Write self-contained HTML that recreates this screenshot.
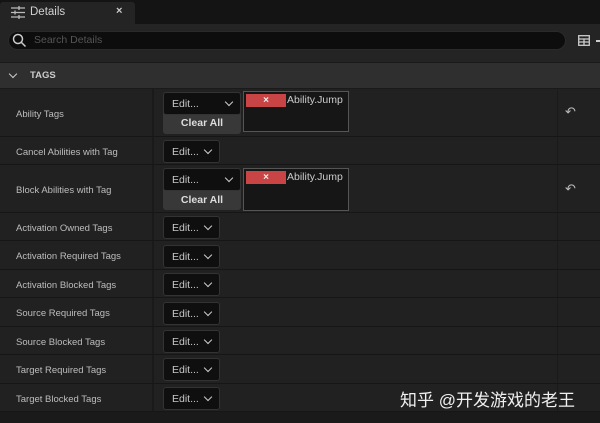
<!DOCTYPE html><html><head><style>
*{margin:0;padding:0;box-sizing:border-box}
body{width:600px;height:423px;background:#1a1a1a;font-family:"Liberation Sans","Noto Sans CJK SC",sans-serif;overflow:hidden;position:relative;color:#c0c0c0}
.a{position:absolute}
.row{position:absolute;left:0;width:600px;background:#212121;border-bottom:1px solid #161616}
.lbl{position:absolute;left:16px;font-size:9.5px;color:#bdbdbd}
.sep{position:absolute;left:152px;top:0;bottom:0;width:2px;background:#1a1a1a}
.sep2{position:absolute;left:557px;top:0;bottom:0;width:1px;background:#1a1a1a}
.edit{position:absolute;left:163px;width:57px;height:23px;background:#0f0f0f;border:1px solid #333;border-radius:3px;font-size:10.5px;color:#c8c8c8;padding:5px 0 0 8px}
.chev{position:absolute;width:6px;height:6px;border-right:1.6px solid #ccc;border-bottom:1.6px solid #ccc;transform:rotate(45deg)}
</style></head><body>
<div class="a" style="left:0;top:0;width:600px;height:24px;background:#141414"></div>
<div class="a" style="left:0;top:2px;width:135px;height:22px;background:#242424;border-radius:3px 3px 0 0"></div>
<svg class="a" style="left:10px;top:6px" width="16" height="13" viewBox="0 0 16 13" stroke="#bbb" stroke-width="1.3"><path d="M1 2h14M1 6.5h14M1 11h14"/><path d="M9 0v4M5 4.5v4M9 9v4" /></svg>
<div class="a" style="left:30px;top:6px;font-size:11.5px;color:#d0d0d0">Details</div>
<div class="a" style="left:116px;top:5px;font-size:11px;color:#ccc;font-weight:bold">×</div>
<div class="a" style="left:0;top:24px;width:600px;height:38px;background:#242424"></div>
<div class="a" style="left:8px;top:31px;width:558px;height:19px;background:#0d0d0d;border-radius:10px;border:1px solid #2a2a2a"></div>
<svg class="a" style="left:12px;top:33px" width="15" height="15" viewBox="0 0 15 15" fill="none" stroke="#ccc" stroke-width="1.5"><circle cx="6" cy="6" r="4.5"/><path d="M9.5 9.5l4 4"/></svg>
<div class="a" style="left:34px;top:34px;font-size:10.5px;color:#555">Search Details</div>
<svg class="a" style="left:578px;top:35px" width="12" height="11" viewBox="0 0 12 11" fill="none" stroke="#ccc" stroke-width="1.3"><rect x="0.7" y="0.7" width="10.6" height="9.6"/><path d="M0.7 4h10.6M0.7 7h10.6M6 4v6.3"/></svg>
<div class="a" style="left:596px;top:40px;width:4px;height:1.5px;background:#ccc"></div>
<div class="a" style="left:0;top:63px;width:600px;height:25px;background:#2f2f2f"></div>
<div class="chev" style="left:10px;top:71px"></div>
<div class="a" style="left:30px;top:70px;font-size:9.5px;font-weight:bold;color:#ccc">TAGS</div>

<div class="row" style="top:89px;height:48px"><div class="sep"></div><div class="sep2"></div><div class="lbl" style="top:20px">Ability Tags</div></div>
<div class="row" style="top:137px;height:28px"><div class="sep"></div><div class="sep2"></div><div class="lbl" style="top:10px">Cancel Abilities with Tag</div></div>
<div class="row" style="top:165px;height:48px"><div class="sep"></div><div class="sep2"></div><div class="lbl" style="top:20px">Block Abilities with Tag</div></div>
<div class="row" style="top:213px;height:28px"><div class="sep"></div><div class="sep2"></div><div class="lbl" style="top:10px">Activation Owned Tags</div></div>
<div class="row" style="top:241px;height:29px"><div class="sep"></div><div class="sep2"></div><div class="lbl" style="top:10px">Activation Required Tags</div></div>
<div class="row" style="top:270px;height:28px"><div class="sep"></div><div class="sep2"></div><div class="lbl" style="top:10px">Activation Blocked Tags</div></div>
<div class="row" style="top:298px;height:29px"><div class="sep"></div><div class="sep2"></div><div class="lbl" style="top:10px">Source Required Tags</div></div>
<div class="row" style="top:327px;height:28px"><div class="sep"></div><div class="sep2"></div><div class="lbl" style="top:10px">Source Blocked Tags</div></div>
<div class="row" style="top:355px;height:29px"><div class="sep"></div><div class="sep2"></div><div class="lbl" style="top:10px">Target Required Tags</div></div>
<div class="row" style="top:384px;height:28px"><div class="sep"></div><div class="sep2"></div><div class="lbl" style="top:10px">Target Blocked Tags</div></div>

<div class="a" style="left:163px;top:92px;width:78px;height:42px;background:#383838;border-radius:3px"></div>
<div class="edit" style="top:92px;width:78px">Edit...<div class="chev" style="left:62px;top:6px"></div></div>
<div class="a" style="left:163px;top:117px;width:78px;font-size:10.5px;font-weight:bold;color:#ddd;text-align:center">Clear All</div>
<div class="a" style="left:243px;top:91px;width:106px;height:41px;background:#161616;border:1.5px solid #555"></div>
<div class="a" style="left:246px;top:94px;width:40px;height:13px;background:#c94545;color:#eee;font-size:10px;font-weight:bold;text-align:center;line-height:13px">×</div>
<div class="a" style="left:287px;top:94px;font-size:10.5px;color:#ccc">Ability.Jump</div>

<div class="a" style="left:163px;top:168px;width:78px;height:42px;background:#383838;border-radius:3px"></div>
<div class="edit" style="top:168px;width:78px">Edit...<div class="chev" style="left:62px;top:6px"></div></div>
<div class="a" style="left:163px;top:194px;width:78px;font-size:10.5px;font-weight:bold;color:#ddd;text-align:center">Clear All</div>
<div class="a" style="left:243px;top:168px;width:106px;height:43px;background:#161616;border:1.5px solid #555"></div>
<div class="a" style="left:246px;top:171px;width:40px;height:13px;background:#c94545;color:#eee;font-size:10px;font-weight:bold;text-align:center;line-height:13px">×</div>
<div class="a" style="left:287px;top:171px;font-size:10.5px;color:#ccc">Ability.Jump</div>

<div class="a" style="left:565px;top:104px;font-size:13px;color:#bbb">↶</div>
<div class="a" style="left:565px;top:181px;font-size:13px;color:#bbb">↶</div>

<div class="edit" style="top:140px">Edit...<div class="chev" style="left:41px;top:6px"></div></div>
<div class="edit" style="top:216px">Edit...<div class="chev" style="left:41px;top:6px"></div></div>
<div class="edit" style="top:245px">Edit...<div class="chev" style="left:41px;top:6px"></div></div>
<div class="edit" style="top:273px">Edit...<div class="chev" style="left:41px;top:6px"></div></div>
<div class="edit" style="top:302px">Edit...<div class="chev" style="left:41px;top:6px"></div></div>
<div class="edit" style="top:330px">Edit...<div class="chev" style="left:41px;top:6px"></div></div>
<div class="edit" style="top:358px">Edit...<div class="chev" style="left:41px;top:6px"></div></div>
<div class="edit" style="top:387px">Edit...<div class="chev" style="left:41px;top:6px"></div></div>

<div class="a" style="left:400px;top:386px;font-size:17px;color:#f0f0f0">知乎 @开发游戏的老王</div>
</body></html>
